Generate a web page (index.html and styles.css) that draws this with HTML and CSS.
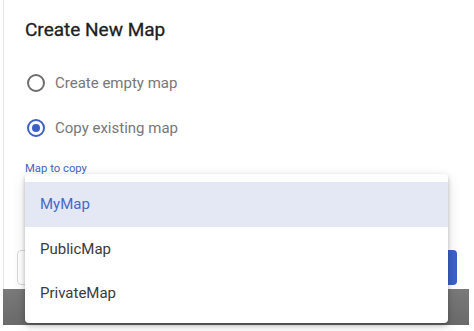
FILE: index.html
```html
<!DOCTYPE html>
<html lang="en">

<head>
    <meta charset="UTF-8">
    <meta name="viewport" content="width=device-width, initial-scale=1.0">
    <title>Create New Map</title>
    <link rel="stylesheet" href="styles.css">
</head>

<body>
    <div class="screen">
        <div class="dialog">
            <div class="dialog-title">Create New Map</div>
            <div class="radio-row">
                <span class="radio"></span>
                <span class="radio-label">Create empty map</span>
            </div>
            <div class="radio-row">
                <span class="radio checked"></span>
                <span class="radio-label">Copy existing map</span>
            </div>
            <div class="field">
                <label class="field-label">Map to copy</label>
                <div class="field-value"></div>
            </div>
            <div class="actions">
                <a href="javascript:;" class="btn btn-cancel">Cancel</a>
                <a href="javascript:;" class="btn btn-create">Create</a>
            </div>
        </div>
        <div class="backdrop"></div>

        <!-- 下拉菜单 -->
        <ul class="menu">
            <li class="menu-item selected">MyMap</li>
            <li class="menu-item">PublicMap</li>
            <li class="menu-item">PrivateMap</li>
        </ul>
    </div>
</body>

</html>
```

FILE: styles.css
```css
* {
    box-sizing: border-box;
}

body,
html {
    margin: 0;
    height: 100%;
    background-color: #fff;
    font-family: Roboto, "Noto Sans", Arial, sans-serif;
}

a {
    text-decoration: none;
}

.screen {
    position: relative;
    padding-left: 3px;
    height: 100%;
}

.dialog {
    width: 465px;
    height: 289px;
    padding: 14px 22px 0 21px;
    background-color: #fff;
    border-left: 1px solid #e4e4e4;
}

.dialog-title {
    font-size: 19px;
    font-weight: 400;
    line-height: 32px;
    color: #1e1e1e;
    margin-bottom: 14px;
    -webkit-text-stroke: .3px #1e1e1e;
}

.radio-row {
    display: flex;
    align-items: center;
    height: 45px;
    padding-left: 2px;
}

.radio {
    width: 18px;
    height: 18px;
    border: 2px solid #6e6e6e;
    border-radius: 50%;
    margin-right: 10px;
    flex-shrink: 0;
}

.radio.checked {
    border-color: #3d60c6;
    padding: 3px;
}

.radio.checked::after {
    content: "";
    display: block;
    width: 8px;
    height: 8px;
    border-radius: 50%;
    background-color: #3d60c6;
}

.radio-label {
    font-size: 15px;
    color: #777;
}

.field {
    margin-top: 11px;
}

.field-label {
    display: block;
    font-size: 11.3px;
    line-height: 16px;
    color: #4266c4;
}

.field-value {
    height: 56px;
}

.actions {
    display: flex;
    justify-content: space-between;
    margin: 17px -11px 0 -8px;
}

.btn {
    display: inline-block;
    height: 35px;
    line-height: 35px;
    padding: 0 16px;
    border-radius: 4px;
    font-size: 14px;
}

.btn-cancel {
    border: 1px solid #d8d8d8;
    color: #3d60c6;
}

.btn-create {
    background-color: #3b62c9;
    color: #fff;
}

.backdrop {
    width: 466px;
    height: 36px;
    background: linear-gradient(#7a7a7a, #6a6a6a);
}

.menu {
    position: absolute;
    top: 174px;
    left: 25px;
    width: 423px;
    margin: 0;
    padding: 8px 0;
    list-style: none;
    background-color: #fff;
    border-radius: 4px;
    box-shadow: 0 2px 4px rgba(0, 0, 0, .25), 0 4px 14px rgba(0, 0, 0, .12);
}

.menu-item {
    height: 44px;
    line-height: 44px;
    padding-left: 15px;
    font-size: 15px;
    color: #3a3a3a;
}

.menu-item.selected {
    height: 45px;
    line-height: 45px;
    background-color: #e3e8f4;
    color: #4668c6;
}
```
